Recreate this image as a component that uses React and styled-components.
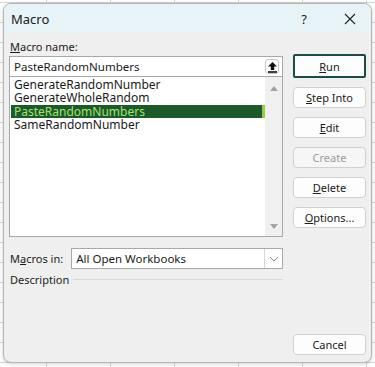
import React from "react";
import styled, { createGlobalStyle } from "styled-components";

const GlobalStyle = createGlobalStyle`
  html, body {
    margin: 0;
    padding: 0;
  }
  body {
    width: 375px;
    height: 367px;
    overflow: hidden;
    background-color: #ffffff;
    background-image:
      linear-gradient(to right, #d6d6d6 1px, transparent 1px),
      linear-gradient(to bottom, #d6d6d6 1px, transparent 1px);
    background-size: 64px 20px;
    background-position: 46px 2px;
    font-family: "Segoe UI", "Noto Sans", sans-serif;
    color: #1a1a1a;
  }
`;

const macros = [
  "GenerateRandomNumber",
  "GenerateWholeRandom",
  "PasteRandomNumbers",
  "SameRandomNumber",
];

const buttons = [
  { key: "S", rest: "tep Into" },
  { key: "E", rest: "dit" },
  { key: "", rest: "Create", disabled: true },
  { key: "D", rest: "elete" },
  { key: "O", rest: "ptions..." },
];

function App() {
  return (
    <>
      <GlobalStyle />
      <Dialog>
        <TitleBar>
          <Title>Macro</Title>
          <TitleIcons>
            <Help>?</Help>
            <svg width="12" height="12" viewBox="0 0 12 12">
              <path d="M1 1 L11 11 M11 1 L1 11" stroke="#222" strokeWidth="1.1" />
            </svg>
          </TitleIcons>
        </TitleBar>
        <Body>
          <LeftColumn>
            <Label>
              <u>M</u>acro name:
            </Label>
            <NameInput>
              <span>PasteRandomNumbers</span>
              <UploadButton>
                <svg width="11" height="12" viewBox="0 0 11 12">
                  <path d="M5.5 1 L1 5.5 H3.8 V9 H7.2 V5.5 H10 Z" fill="#111" />
                  <rect x="1" y="10.2" width="9" height="1.6" fill="#111" />
                </svg>
              </UploadButton>
            </NameInput>
            <ListBox>
              <Items>
                {macros.map((m) => (
                  <Item key={m} selected={m === "PasteRandomNumbers"}>
                    {m}
                  </Item>
                ))}
              </Items>
              <ScrollBar>
                <svg width="10" height="7" viewBox="0 0 10 7">
                  <path d="M1 6 L5 1 L9 6 Z" fill="#a3a3a3" />
                </svg>
                <svg width="10" height="7" viewBox="0 0 10 7">
                  <path d="M1 1 L5 6 L9 1 Z" fill="#a3a3a3" />
                </svg>
              </ScrollBar>
            </ListBox>
            <MacrosInRow>
              <Label>
                M<u>a</u>cros in:
              </Label>
              <Combo>
                <span>All Open Workbooks</span>
                <ComboArrow>
                  <svg width="10" height="6" viewBox="0 0 10 6">
                    <path d="M1 1 L5 5 L9 1" stroke="#8a8a8a" strokeWidth="1" fill="none" />
                  </svg>
                </ComboArrow>
              </Combo>
            </MacrosInRow>
            <DescriptionRow>
              <Label>Description</Label>
              <Rule />
            </DescriptionRow>
          </LeftColumn>
          <RightColumn>
            <Button primary>
              <u>R</u>un
            </Button>
            {buttons.map((b) => (
              <Button key={b.rest} disabled={b.disabled}>
                {b.key && <u>{b.key}</u>}
                {b.rest}
              </Button>
            ))}
            <CancelButton>Cancel</CancelButton>
          </RightColumn>
        </Body>
      </Dialog>
    </>
  );
}

const Dialog = styled.div`
  margin: 3px 0 0 3px;
  width: 369px;
  height: 360px;
  box-sizing: border-box;
  border: 1px solid #b4b4b4;
  border-radius: 8px;
  background: #efefef;
  box-shadow: 0 1px 4px rgba(0, 0, 0, 0.18);
  overflow: hidden;
  display: flex;
  flex-direction: column;
`;

const TitleBar = styled.div`
  height: 29px;
  background: #e7f3f6;
  display: flex;
  align-items: center;
  justify-content: space-between;
  padding: 0 15px 0 7px;
`;

const Title = styled.div`
  font-size: 13px;
`;

const TitleIcons = styled.div`
  display: flex;
  align-items: center;
  gap: 37px;
`;

const Help = styled.span`
  font-size: 13px;
`;

const Body = styled.div`
  flex: 1;
  display: grid;
  grid-template-columns: 274px 73px;
  column-gap: 10px;
  padding: 6px 0 7px 5px;
`;

const LeftColumn = styled.div`
  display: flex;
  flex-direction: column;
`;

const Label = styled.div`
  font-size: 11px;
  line-height: 15px;
  padding-left: 1px;
  white-space: nowrap;
`;

const NameInput = styled.div`
  margin-top: 2px;
  height: 20px;
  box-sizing: border-box;
  border: 1px solid #a8a8a8;
  border-bottom: none;
  background: #fff;
  display: flex;
  align-items: center;
  justify-content: space-between;
  padding: 0 3px 0 4px;
  font-size: 11.5px;
`;

const UploadButton = styled.div`
  width: 14px;
  height: 15px;
  box-sizing: border-box;
  border: 1px solid #c8c8c8;
  border-radius: 3px;
  background: #fdfdfd;
  display: flex;
  align-items: center;
  justify-content: center;
`;

const ListBox = styled.div`
  height: 161px;
  box-sizing: border-box;
  border: 1px solid #a8a8a8;
  background: #fff;
  display: flex;
`;

const Items = styled.div`
  flex: 1;
  padding: 1px 0 0 1px;
`;

const Item = styled.div`
  font-size: 12px;
  line-height: 13.4px;
  height: 13.4px;
  padding-left: 3px;
  color: ${(p) => (p.selected ? "#a2e26c" : "#1a1a1a")};
  background: ${(p) => (p.selected ? "#1c5a2b" : "transparent")};
  border-right: 3px solid ${(p) => (p.selected ? "#9bc94f" : "transparent")};
`;

const ScrollBar = styled.div`
  width: 17px;
  background: #f0f0f0;
  display: flex;
  flex-direction: column;
  align-items: center;
  justify-content: space-between;
  padding: 8px 0 6px;
`;

const MacrosInRow = styled.div`
  margin-top: 11px;
  display: flex;
  align-items: center;
  gap: 8px;
`;

const Combo = styled.div`
  flex: 1;
  height: 21px;
  box-sizing: border-box;
  border: 1px solid #a8a8a8;
  background: #fff;
  display: flex;
  align-items: center;
  justify-content: space-between;
  padding-left: 4px;
  font-size: 11.5px;
`;

const ComboArrow = styled.div`
  width: 17px;
  height: 19px;
  border-left: 1px solid #d8d8d8;
  display: flex;
  align-items: center;
  justify-content: center;
`;

const DescriptionRow = styled.div`
  margin-top: 3px;
  display: flex;
  align-items: center;
  gap: 4px;
`;

const Rule = styled.div`
  flex: 1;
  height: 1px;
  background: #d8d8d8;
`;

const RightColumn = styled.div`
  display: flex;
  flex-direction: column;
  gap: 9px;
  padding-top: 15px;
`;

const Button = styled.button`
  height: ${(p) => (p.primary ? "24px" : "21px")};
  box-sizing: border-box;
  padding: 0;
  font-family: inherit;
  font-size: 11px;
  color: ${(p) => (p.disabled ? "#9c9c9c" : "#1a1a1a")};
  background: ${(p) => (p.disabled ? "#f6f6f6" : "#fdfdfd")};
  border: ${(p) => (p.primary ? "2px solid #1c4b4a" : "1px solid #d0d0d0")};
  border-radius: ${(p) => (p.primary ? "2px" : "4px")};
`;

const CancelButton = styled(Button)`
  margin-top: auto;
`;

export default App;
